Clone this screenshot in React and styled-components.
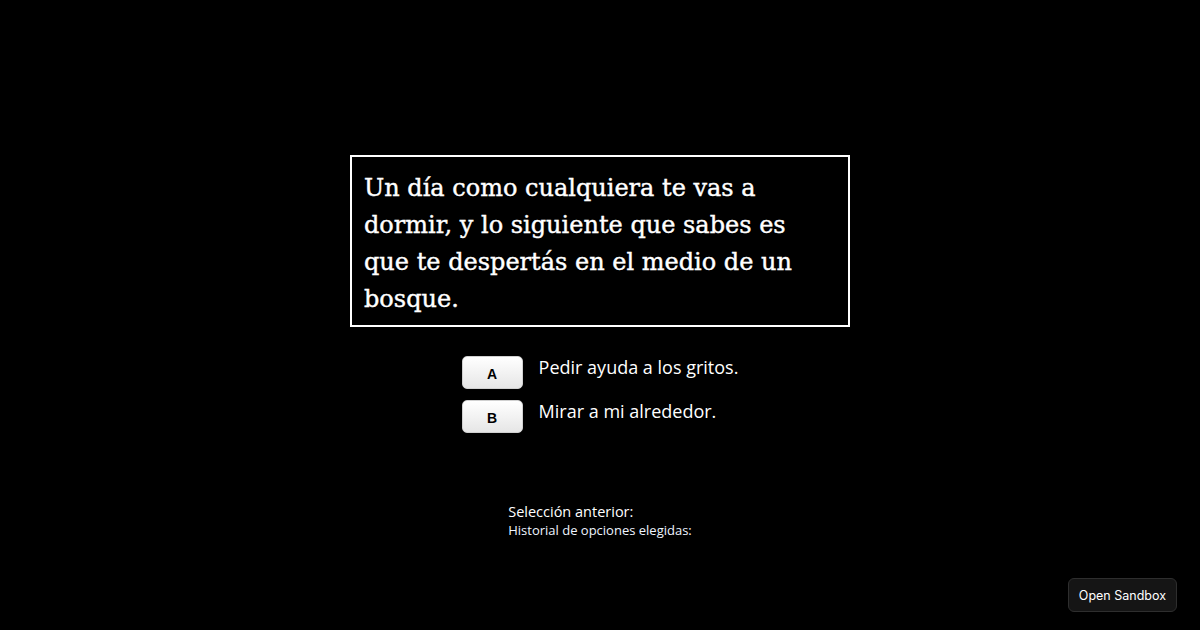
import React from "react";
import styled, { createGlobalStyle } from "styled-components";

const Global = createGlobalStyle`
  html, body { margin: 0; padding: 0; background: #000; }
  body { width: 1200px; height: 630px; overflow: hidden; }
`;

const Page = styled.div`
  width: 1200px;
  height: 630px;
  background: #000;
  display: flex;
  flex-direction: column;
  align-items: center;
  padding-top: 155px;
  box-sizing: border-box;
  position: relative;
`;

const StoryBox = styled.div`
  width: 500px;
  box-sizing: border-box;
  border: 2px solid #fff;
  padding: 13px 12px 7px 12px;
  font-family: "DejaVu Serif", "Liberation Serif", serif;
  font-size: 24px;
  line-height: 37px;
  color: #fff;
  -webkit-text-stroke: 0.4px #fff;
`;

const Choices = styled.div`
  margin-top: 29px;
  display: flex;
  flex-direction: column;
  gap: 11px;
`;

const ChoiceRow = styled.div`
  display: flex;
  align-items: flex-start;
  gap: 16px;
`;

const ChoiceButton = styled.button`
  width: 61px;
  height: 33px;
  border: 1px solid #d0d0d0;
  border-radius: 5px;
  background: linear-gradient(#ffffff, #e6e6e6);
  font-family: "Liberation Sans", Arial, sans-serif;
  font-weight: bold;
  font-size: 14px;
  color: #000;
  padding: 2px 0 0;
  display: flex;
  align-items: center;
  justify-content: center;
`;

const ChoiceText = styled.span`
  font-family: "Open Sans", sans-serif;
  font-size: 18px;
  line-height: 22px;
  color: #fff;
`;

const History = styled.div`
  margin-top: 70px;
  display: flex;
  flex-direction: column;
  font-family: "Open Sans", sans-serif;
  color: #fff;
`;

const HistoryTitle = styled.div`
  font-size: 14.5px;
  line-height: 18px;
`;

const HistorySub = styled.div`
  font-size: 13px;
  line-height: 18px;
  color: #eef4ff;
`;

const SandboxButton = styled.button`
  position: absolute;
  right: 23px;
  bottom: 18px;
  height: 34px;
  padding: 0 10px;
  background: #151515;
  border: 1px solid #2e2e2e;
  border-radius: 6px;
  color: #fff;
  font-family: Inter, "Liberation Sans", sans-serif;
  font-size: 12.5px;
`;

export default function App() {
  return (
    <>
      <Global />
      <Page>
        <StoryBox>
          Un día como cualquiera te vas a dormir, y lo siguiente que sabes es
          que te despertás en el medio de un bosque.
        </StoryBox>
        <Choices>
          <ChoiceRow>
            <ChoiceButton>A</ChoiceButton>
            <ChoiceText>Pedir ayuda a los gritos.</ChoiceText>
          </ChoiceRow>
          <ChoiceRow>
            <ChoiceButton>B</ChoiceButton>
            <ChoiceText>Mirar a mi alrededor.</ChoiceText>
          </ChoiceRow>
        </Choices>
        <History>
          <HistoryTitle>Selección anterior:</HistoryTitle>
          <HistorySub>Historial de opciones elegidas:</HistorySub>
        </History>
        <SandboxButton>Open Sandbox</SandboxButton>
      </Page>
    </>
  );
}
